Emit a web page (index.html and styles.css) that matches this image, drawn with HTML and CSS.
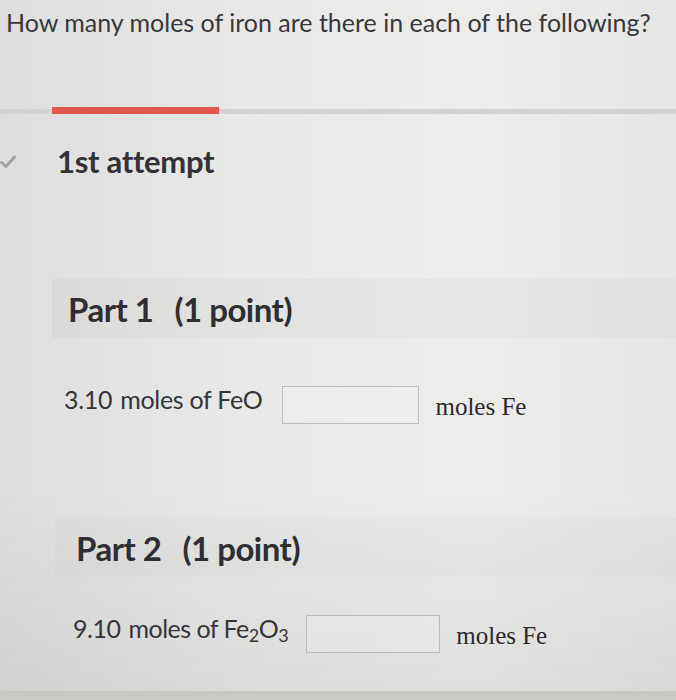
FILE: index.html
```html
<!DOCTYPE html>
<html>
<head>
<meta charset="utf-8">
<link rel="stylesheet" href="styles.css">
</head>
<body>
<div class="page">
  <h1 class="title">How many moles of iron are there in each of the following?</h1>
  <div class="progress"><div class="fill"></div></div>
  <div class="attempt">
    <svg class="check" width="16" height="14" viewBox="0 0 16 14"><path d="M1.5 7.5 L6 11.5 L14.5 2" fill="none" stroke="#a3a3a3" stroke-width="3" stroke-linecap="round" stroke-linejoin="round"/></svg>
    <span class="attempt-label">1st attempt</span>
  </div>

  <section class="part part1">
    <h2 class="part-head"><span class="part-name">Part 1</span><span class="part-points">(1 point)</span></h2>
    <div class="row">
      <span class="q"><span class="num">3.10</span>moles of FeO</span>
      <span class="answer"></span>
      <span class="unit">moles Fe</span>
    </div>
  </section>

  <section class="part part2">
    <h2 class="part-head"><span class="part-name">Part 2</span><span class="part-points">(1 point)</span></h2>
    <div class="row">
      <span class="q"><span class="num">9.10</span>moles of Fe<sub>2</sub>O<sub>3</sub></span>
      <span class="answer"></span>
      <span class="unit">moles Fe</span>
    </div>
  </section>
  <div class="bottom-line"></div>
</div>
</body>
</html>
```

FILE: styles.css
```css
html, body {
  margin: 0;
  padding: 0;
}
body {
  width: 676px;
  height: 700px;
  overflow: hidden;
  font-family: Lato, "Open Sans", sans-serif;
  color: #333336;
  background:
    linear-gradient(180deg, rgba(255,255,255,0) 0%, rgba(255,255,255,0) 70%, rgba(0,0,0,0.06) 100%),
    linear-gradient(90deg, #dedede 0%, #e8e8e7 35%, #ececeb 70%, #e6e6e4 100%);
}
.page {
  display: flex;
  flex-direction: column;
  height: 700px;
}
.title {
  margin: 0;
  padding: 7px 0 0 6px;
  font-size: 25px;
  line-height: 30px;
  font-weight: 400;
  letter-spacing: 0;
  color: #38383b;
}
.progress {
  margin-top: 72px;
  height: 5px;
  background: #d3d3d3;
}
.fill {
  width: 167px;
  height: 7px;
  margin-left: 52px;
  margin-top: -2px;
  background: #e0584d;
}
.attempt {
  display: flex;
  align-items: center;
  margin-top: 30px;
  height: 34px;
}
.check {
  margin-left: 0;
  margin-top: 2px;
}
.attempt-label {
  margin-left: 41px;
  font-size: 31px;
  font-weight: 700;
  letter-spacing: -0.3px;
  color: #323237;
}
.part {
  display: flex;
  flex-direction: column;
}
.part1 {
  margin-top: 101px;
}
.part2 {
  margin-top: 94px;
  padding-left: 9px;
}
.part-head {
  margin: 0 0 0 52px;
  height: 59px;
  display: flex;
  align-items: center;
  padding-left: 16px;
  font-size: 33px;
  font-weight: 700;
  color: #2f2f33;
  background: rgba(0, 0, 0, 0.025);
  letter-spacing: -0.5px;
}
.part2 .part-head {
  margin-left: 46px;
  padding-left: 21px;
  background: rgba(0, 0, 0, 0.015);
}
.part-points {
  margin-left: 21px;
}
.row {
  display: flex;
  align-items: center;
  margin-top: 48px;
  margin-left: 64px;
  height: 38px;
}
.part2 .row {
  margin-top: 38px;
}
.q {
  font-size: 25px;
  color: #36363a;
  letter-spacing: -0.3px;
  margin-top: -12px;
}
.part2 .q {
  letter-spacing: -0.5px;
}
.q sub {
  font-size: 18px;
  vertical-align: -4px;
  line-height: 0;
}
.num {
  margin-right: 8px;
}
.answer {
  width: 137px;
  height: 38px;
  margin-left: 20px;
  border: 1px solid #bdbdbc;
  background: rgba(255, 255, 255, 0.15);
  box-sizing: border-box;
}
.part2 .answer {
  width: 134px;
  margin-left: 18px;
}
.unit {
  margin-left: 16px;
  margin-top: 4px;
  font-family: "Liberation Serif", "Times New Roman", serif;
  font-size: 25px;
  color: #2a2a2d;
}
.bottom-line {
  margin-top: auto;
  height: 9px;
  background: #c9c9c6;
}
```
